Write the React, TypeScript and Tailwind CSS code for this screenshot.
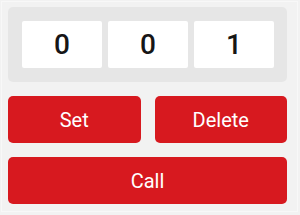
import { useState } from "react";

const DIGITS = ["0", "0", "1"];

export default function App() {
  const [digits] = useState(DIGITS);

  return (
    <div className="w-[300px] h-[215px] bg-[#f2f2f2] p-px font-['Roboto',sans-serif]">
      <div className="h-[211px] w-[297px] border border-[#f8f8f8] pl-[6px] pr-[10px] pt-[5px]">
        <div className="rounded-[5px] bg-[#e6e6e6] py-[14px] pl-[14px] pr-[13px] flex gap-[6px]">
          {digits.map((d, i) => (
            <div
              key={i}
              className="flex-1 h-[47px] bg-white rounded-[2px] flex items-center justify-center text-[28px] font-medium text-[#161616]"
            >
              {d}
            </div>
          ))}
        </div>

        <div className="mt-[14px] grid grid-cols-2 gap-[14px]">
          <button className="h-[47px] rounded-[5px] bg-[#d7191f] text-white text-[20px]">
            Set
          </button>
          <button className="h-[47px] rounded-[5px] bg-[#d7191f] text-white text-[20px]">
            Delete
          </button>
        </div>

        <button className="mt-[14px] w-full h-[47px] rounded-[5px] bg-[#d7191f] text-white text-[20px]">
          Call
        </button>
      </div>
    </div>
  );
}
